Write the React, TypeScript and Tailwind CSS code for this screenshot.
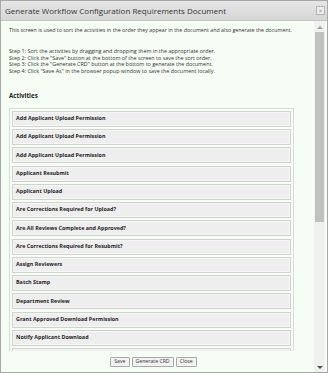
import React from 'react';

const ACTIVITIES = [
  'Add Applicant Upload Permission',
  'Add Applicant Upload Permission',
  'Add Applicant Upload Permission',
  'Applicant Resubmit',
  'Applicant Upload',
  'Are Corrections Required for Upload?',
  'Are All Reviews Complete and Approved?',
  'Are Corrections Required for Resubmit?',
  'Assign Reviewers',
  'Batch Stamp',
  'Department Review',
  'Grant Approved Download Permission',
  'Notify Applicant Download',
  '',
];

const STEPS = [
  'Step 1: Sort the activities by dragging and dropping them in the appropriate order.',
  'Step 2: Click the "Save" button at the bottom of the screen to save the sort order.',
  'Step 3: Click the "Generate CRD" button at the bottom to generate the document.',
  'Step 4: Click "Save As" in the browser popup window to save the document locally.',
];

const font = { fontFamily: '"Open Sans", "Noto Sans", sans-serif' };

export default function App() {
  return (
    <div
      className="w-[328px] h-[373px] flex flex-col border border-[#a8a8a8] bg-[#f6fdf4] overflow-hidden"
      style={font}
    >
      {/* Title bar */}
      <div className="h-[20px] shrink-0 flex items-center justify-between pl-[4px] pr-[2px] bg-gradient-to-b from-[#e6e6e6] to-[#d6d6d6] border-b border-[#c4c4c4]">
        <span className="text-[8px] leading-none text-[#333]">
          Generate Workflow Configuration Requirements Document
        </span>
        <div className="w-[9px] h-[9px] border border-[#b4b4b4] bg-[#ececec] flex items-center justify-center">
          <span className="text-[6px] leading-none text-[#777]">×</span>
        </div>
      </div>

      {/* Body */}
      <div className="flex-1 flex min-h-0">
        <div className="flex-1 flex flex-col min-w-0 pl-[8px] pr-[20px]">
          <p className="mt-[6px] text-[5.3px] leading-[7px] text-[#333] whitespace-nowrap">
            This screen is used to sort the activities in the order they appear in the document and also generate the document.
          </p>
          <div className="mt-[14px] flex flex-col">
            {STEPS.map(s => (
              <p key={s} className="text-[5.4px] leading-[6.7px] text-[#333] whitespace-nowrap">
                {s}
              </p>
            ))}
          </div>
          <h3 className="mt-[17px] text-[6.2px] leading-[8px] font-bold text-[#222]">Activities</h3>

          {/* Activities list */}
          <div className="mt-[8px] h-[243px] overflow-hidden border-x border-t border-[#d6dcd4] p-[2px] pb-0">
            <div className="flex flex-col gap-[2.25px]">
              {ACTIVITIES.map((a, i) => (
                <div
                  key={i}
                  className="h-[16px] shrink-0 flex items-center px-[3px] bg-[#eeeeee] border border-[#cfd3cd] shadow-[inset_0_0_0_1px_#f6f6f6]"
                >
                  <span className="text-[5.4px] leading-none font-bold text-[#1e1e1e] whitespace-nowrap">{a}</span>
                </div>
              ))}
            </div>
          </div>

          {/* Buttons */}
          <div className="mt-[6px] flex justify-center gap-[2px] pl-[4px]">
            {['Save', 'Generate CRD', 'Close'].map(b => (
              <button
                key={b}
                className="h-[10px] px-[3px] flex items-center bg-[#f2f2f2] border border-[#a9a9a9] rounded-[1px] text-[5.2px] leading-none text-[#333]"
              >
                {b}
              </button>
            ))}
          </div>
        </div>

        {/* Scrollbar */}
        <div className="w-[11px] shrink-0 mr-[2px] flex flex-col items-center bg-[#f0f0f0] pt-[3px] pb-[2px]">
          <div className="h-[6px] flex items-center justify-center">
            <div className="w-0 h-0 border-l-[3px] border-r-[3px] border-b-[3px] border-l-transparent border-r-transparent border-b-[#a0a0a0]" />
          </div>
          <div className="mt-[2px] w-[9px] h-[190px] bg-[#c1c1c1]" />
          <div className="flex-1" />
          <div className="h-[6px] flex items-center justify-center">
            <div className="w-0 h-0 border-l-[3px] border-r-[3px] border-t-[3px] border-l-transparent border-r-transparent border-t-[#505050]" />
          </div>
        </div>
      </div>
    </div>
  );
}
